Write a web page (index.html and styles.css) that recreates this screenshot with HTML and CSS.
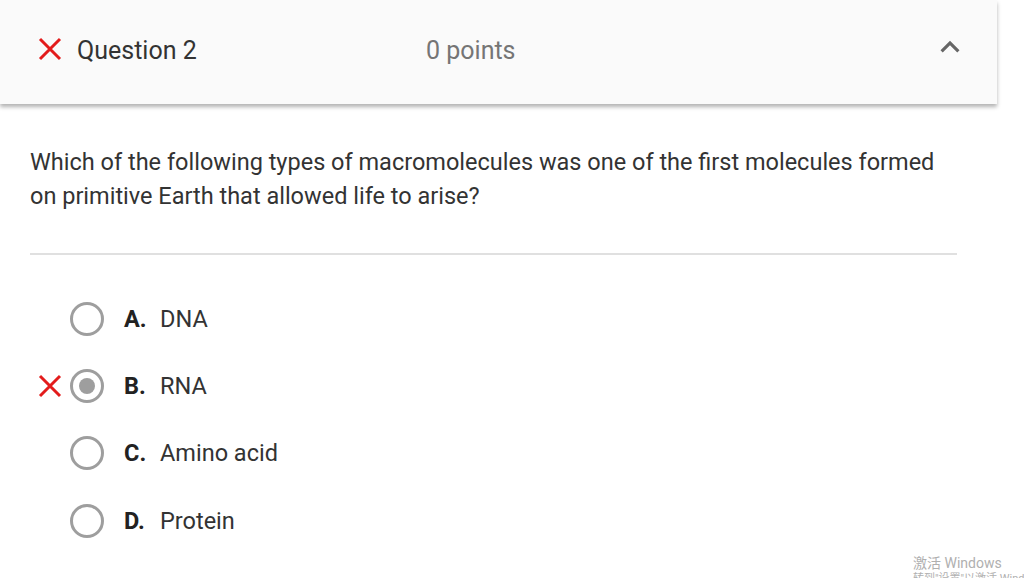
FILE: index.html
```html
<!DOCTYPE html>
<html>
  <head>
    <meta charset="UTF-8" />
    <title>Question 2</title>
    <link rel="stylesheet" href="styles.css">
  </head>
  <body>
    <header class="q-head">
      <div class="q-title">
        <svg class="x-mark" viewBox="0 0 24 24"><path d="M2 2L22 22M22 2L2 22" /></svg>
        <span>Question 2</span>
      </div>
      <div class="q-points">0 points</div>
      <svg class="chevron" viewBox="0 0 24 24"><path d="M7.41 15.41L12 10.83l4.59 4.58L18 14l-6-6-6 6z" /></svg>
    </header>

    <section class="q-body">
      <p class="q-text">Which of the following types of macromolecules was one of the first molecules formed on primitive Earth that allowed life to arise?</p>
      <hr class="q-rule" />

      <ul class="options">
        <li class="option">
          <span class="mark"></span>
          <span class="radio"></span>
          <b class="letter">A.</b>
          <span class="label">DNA</span>
        </li>
        <li class="option">
          <span class="mark">
            <svg class="x-mark" viewBox="0 0 24 24"><path d="M2 2L22 22M22 2L2 22" /></svg>
          </span>
          <span class="radio checked"></span>
          <b class="letter">B.</b>
          <span class="label">RNA</span>
        </li>
        <li class="option">
          <span class="mark"></span>
          <span class="radio"></span>
          <b class="letter">C.</b>
          <span class="label">Amino acid</span>
        </li>
        <li class="option">
          <span class="mark"></span>
          <span class="radio"></span>
          <b class="letter">D.</b>
          <span class="label">Protein</span>
        </li>
      </ul>
    </section>

    <div class="watermark">
      激活 Windows
      <small>转到"设置"以激活 Windows。</small>
    </div>
  </body>
</html>
```

FILE: styles.css
```css
html, body {
  margin: 0;
  height: 100%;
  overflow: hidden;
  background: #fff;
  font-family: Roboto, "Noto Sans CJK SC", sans-serif;
  color: #333;
}

.q-head {
  width: 997px;
  height: 104px;
  box-sizing: border-box;
  padding-left: 38px;
  display: flex;
  align-items: center;
  background: #fafafa;
  box-shadow: 0 3px 4px rgba(0, 0, 0, 0.3);
  position: relative;
}

.q-title {
  width: 388px;
  display: flex;
  align-items: center;
  gap: 15px;
  font-size: 25px;
  color: #333;
  padding-bottom: 6px;
}

.q-title span {
  position: relative;
  top: 1px;
}

.x-mark {
  width: 24px;
  height: 24px;
  flex: none;
}

.x-mark path {
  stroke: #e31c1c;
  stroke-width: 3;
  fill: none;
}

.q-points {
  font-size: 25px;
  color: #757575;
  flex: 1;
  padding-bottom: 4px;
}

.chevron {
  width: 38px;
  height: 38px;
  margin-right: 28px;
  margin-bottom: 10px;
  fill: #666;
}

.q-body {
  padding: 0 40px 0 30px;
  width: 927px;
}

.q-text {
  margin: 41px 0 0;
  font-size: 23.5px;
  line-height: 34px;
  color: #333;
}

.q-rule {
  margin: 40px 0 0;
  border: 0;
  height: 2px;
  background: #e0e0e0;
}

.options {
  list-style: none;
  margin: 30px 0 0;
  padding: 0;
}

.option {
  height: 67.3px;
  display: flex;
  align-items: center;
  padding-left: 8px;
  font-size: 23.5px;
}

.mark {
  width: 24px;
  height: 24px;
  margin-right: 8px;
  display: flex;
}

.radio {
  width: 34px;
  height: 34px;
  box-sizing: border-box;
  border: 3px solid #9e9e9e;
  border-radius: 50%;
  margin-right: 20px;
  display: flex;
  align-items: center;
  justify-content: center;
}

.radio.checked::after {
  content: '';
  width: 16px;
  height: 16px;
  border-radius: 50%;
  background: #9e9e9e;
}

.letter {
  width: 36px;
  font-weight: 700;
  color: #222;
}

.label {
  color: #333;
}

.watermark {
  position: absolute;
  left: 913px;
  top: 554px;
  font-size: 14px;
  color: #b0b0b0;
  line-height: 18px;
  white-space: nowrap;
}

.watermark small {
  display: block;
  font-size: 11px;
  line-height: 14px;
}
```
